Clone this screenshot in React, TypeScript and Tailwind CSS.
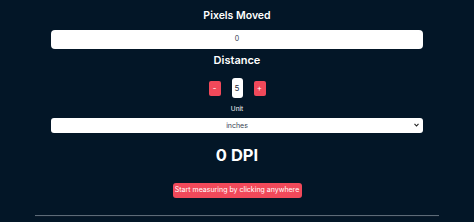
import React from "react";

export default function App() {
  return (
    <div
      className="w-full h-[222px] overflow-hidden bg-[#031627] flex flex-col items-center text-white"
      style={{ fontFamily: "Inter, 'Noto Sans', sans-serif" }}
    >
      <div className="mt-[8px] h-[16px] leading-[16px] text-[10.5px] font-semibold">Pixels Moved</div>
      <div className="mt-[6px] w-[372px] h-[19px] bg-white rounded-[4px] flex items-center justify-center text-[7px] text-gray-700">
        0
      </div>
      <div className="mt-[3px] h-[16px] leading-[16px] text-[11px] font-semibold">Distance</div>
      <div className="mt-[10px] h-[20px] flex items-center gap-[11px]">
        <div className="w-[12px] h-[15px] bg-[#f1495a] rounded-[2px] flex items-center justify-center text-[8px] leading-none">-</div>
        <div className="w-[11px] h-[20px] bg-white rounded-[3px] flex items-center justify-center text-[8px] text-gray-800">5</div>
        <div className="w-[12px] h-[15px] bg-[#f1495a] rounded-[2px] flex items-center justify-center text-[8px] leading-none">+</div>
      </div>
      <div className="mt-[7px] h-[9px] leading-[9px] text-[6.5px]">Unit</div>
      <div className="mt-[4px] w-[372px] h-[15px] bg-white rounded-[3px] relative flex items-center justify-center text-[7px] leading-none text-gray-700">
        inches
        <svg className="absolute right-[4px] top-[5px]" width="5" height="4" viewBox="0 0 5 4">
          <path d="M0.5 0.8 L2.5 3 L4.5 0.8" stroke="#222" strokeWidth="1.1" fill="none" />
        </svg>
      </div>
      <div className="mt-[11px] h-[22px] leading-[22px] text-[16.5px] font-bold">0 DPI</div>
      <div className="mt-[17px] w-[129px] h-[15px] bg-[#f1495a] rounded-[3px] flex items-center justify-center text-[7px] text-white">
        Start measuring by clicking anywhere
      </div>
      <div className="mt-[17px] w-[404px] h-[2px] bg-[#5d6b78] border-b border-[#0b1a2a]" />
    </div>
  );
}
